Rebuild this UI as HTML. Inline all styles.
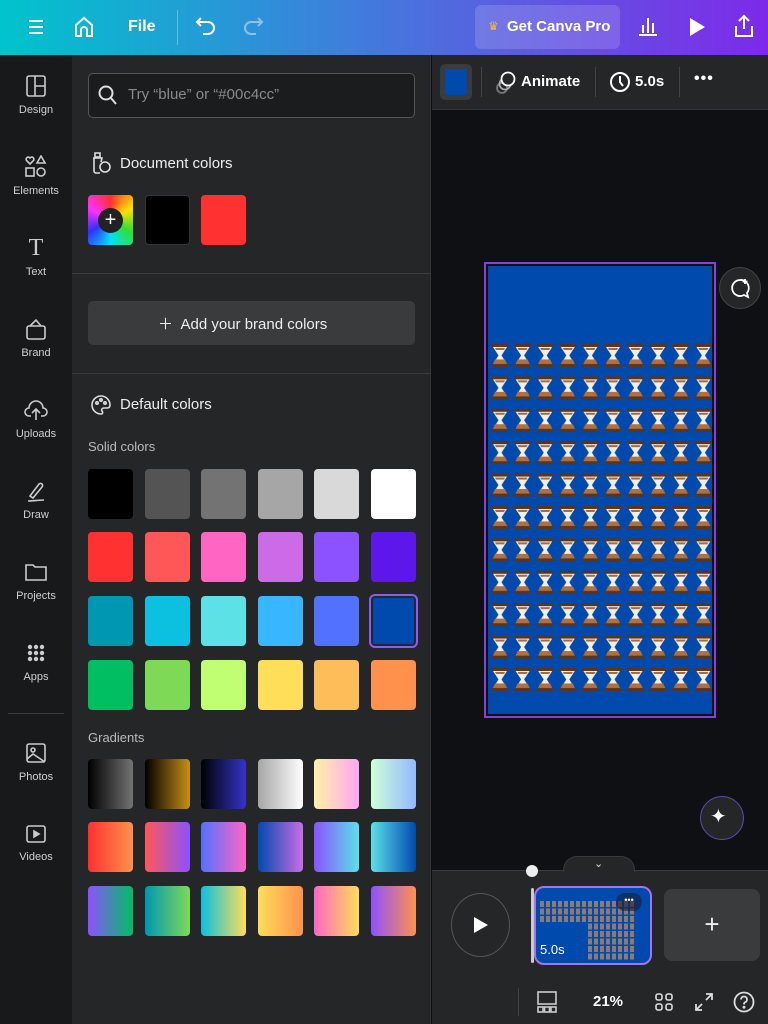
<!DOCTYPE html>
<html><head><meta charset="utf-8"><style>
*{box-sizing:border-box;margin:0;padding:0}
body{width:768px;height:1024px;overflow:hidden;background:#0e1014;font-family:"Liberation Sans",sans-serif;color:#fff;position:relative}
.abs{position:absolute}
.top{left:0;top:0;width:768px;height:55px;background:linear-gradient(90deg,#00c4cc 0%,#2f8fd9 35%,#5a5fe0 65%,#7d2ae8 100%)}
.rail{left:0;top:55px;width:72px;height:969px;background:#18191b}
.ri{position:absolute;left:0;width:72px;text-align:center;font-size:11px;color:#d0d0d0}
.panel{left:72px;top:55px;width:359px;height:969px;background:#252627;border-right:1px solid #333}
.sw{position:absolute;width:45px;height:50px;border-radius:4px}
.lbl{position:absolute;font-size:13px;color:#bbb}
.h{position:absolute;font-size:15px;color:#eee}
</style></head><body>
<div class="abs top">
 <svg class="abs" style="left:26px;top:17px" width="20" height="20" viewBox="0 0 20 20" stroke="#fff" stroke-width="2"><path d="M3 4h14M3 10h14M3 16h14"/></svg>
 <svg class="abs" style="left:73px;top:15px" width="22" height="24" viewBox="0 0 22 24" fill="none" stroke="#fff" stroke-width="2"><path d="M3 21V10l8-7 8 7v11h-5v-6a3 3 0 0 0-6 0v6z"/></svg>
 <div class="abs" style="left:128px;top:18px;font-size:16px;font-weight:bold">File</div>
 <div class="abs" style="left:177px;top:10px;width:1px;height:35px;background:rgba(255,255,255,.3)"></div>
 <svg class="abs" style="left:195px;top:15px" width="22" height="22" viewBox="0 0 22 22" fill="none" stroke="#fff" stroke-width="2"><path d="M6 3L2 7l4 4M2 7h11a6 6 0 0 1 0 12H8"/></svg>
 <svg class="abs" style="left:242px;top:15px" width="22" height="22" viewBox="0 0 22 22" fill="none" stroke="rgba(255,255,255,.45)" stroke-width="2"><path d="M16 3l4 4-4 4M20 7H9a6 6 0 0 0 0 12h5"/></svg>
 <div class="abs" style="left:475px;top:5px;width:145px;height:44px;background:rgba(255,255,255,.15);border-radius:6px"></div>
 <div class="abs" style="left:488px;top:19px;font-size:12px;color:#f7b731">♛</div>
 <div class="abs" style="left:507px;top:18px;font-size:15px;font-weight:bold">Get Canva Pro</div>
 <svg class="abs" style="left:637px;top:15px" width="22" height="22" viewBox="0 0 22 22" stroke="#fff" stroke-width="2"><path d="M2 20h18M6 18V10M11 18V3M16 18V8"/></svg>
 <svg class="abs" style="left:688px;top:16px" width="18" height="22" viewBox="0 0 18 22"><path d="M2 2l15 9-15 9z" fill="#fff"/></svg>
 <svg class="abs" style="left:733px;top:14px" width="22" height="24" viewBox="0 0 22 24" fill="none" stroke="#fff" stroke-width="2"><path d="M11 15V2M6 7l5-5 5 5M3 12v10h16V12"/></svg>
</div>

<div class="abs rail">
 <svg class="abs" style="left:26px;top:20px" width="20" height="22" viewBox="0 0 20 22" fill="none" stroke="#ccc" stroke-width="1.6"><rect x="1" y="1" width="18" height="20" rx="2"/><path d="M9 1v20M9 11h10"/></svg>
 <div class="ri" style="top:49px">Design</div>
 <svg class="abs" style="left:25px;top:100px" width="22" height="22" viewBox="0 0 22 22" fill="none" stroke="#ccc" stroke-width="1.6"><path d="M5 9L1.5 5.5a2 2 0 0 1 3.5-2.5 2 2 0 0 1 3.5 2.5z"/><path d="M16 1l4 7h-8z"/><rect x="1" y="13" width="8" height="8"/><circle cx="16" cy="17" r="4"/></svg>
 <div class="ri" style="top:130px">Elements</div>
 <div class="ri" style="top:180px;font-family:'Liberation Serif',serif;font-size:24px;color:#ccc">T</div>
 <div class="ri" style="top:211px">Text</div>
 <svg class="abs" style="left:26px;top:263px" width="20" height="22" viewBox="0 0 20 22" fill="none" stroke="#ccc" stroke-width="1.6"><rect x="1" y="8" width="18" height="13" rx="2"/><path d="M4 8l6-6 5 6"/></svg>
 <div class="ri" style="top:292px">Brand</div>
 <svg class="abs" style="left:24px;top:344px" width="24" height="22" viewBox="0 0 24 22" fill="none" stroke="#ccc" stroke-width="1.6"><path d="M7 17H5a4 4 0 0 1 0-8 7 7 0 0 1 14 0 4 4 0 0 1 0 8h-2M12 21V11M8 14l4-4 4 4"/></svg>
 <div class="ri" style="top:373px">Uploads</div>
 <svg class="abs" style="left:26px;top:425px" width="20" height="22" viewBox="0 0 20 22" fill="none" stroke="#ccc" stroke-width="1.6"><path d="M4 16l9-12a2 2 0 0 1 3 3L7 18zM2 21c5 0 12-1 16-1"/></svg>
 <div class="ri" style="top:454px">Draw</div>
 <svg class="abs" style="left:25px;top:508px" width="22" height="18" viewBox="0 0 22 18" fill="none" stroke="#ccc" stroke-width="1.6"><path d="M1 2h7l2 2h11v13H1z"/></svg>
 <div class="ri" style="top:535px">Projects</div>
 <svg class="abs" style="left:27px;top:589px" width="18" height="18" viewBox="0 0 18 18" fill="#ccc"><circle cx="3" cy="3" r="2.2"/><circle cx="9" cy="3" r="2.2"/><circle cx="15" cy="3" r="2.2"/><circle cx="3" cy="9" r="2.2"/><circle cx="9" cy="9" r="2.2"/><circle cx="15" cy="9" r="2.2"/><circle cx="3" cy="15" r="2.2"/><circle cx="9" cy="15" r="2.2"/><circle cx="15" cy="15" r="2.2"/></svg>
 <div class="ri" style="top:616px">Apps</div>
 <div class="abs" style="left:8px;top:658px;width:56px;height:1px;background:#3a3a3a"></div>
 <svg class="abs" style="left:26px;top:688px" width="20" height="20" viewBox="0 0 20 20" fill="none" stroke="#ccc" stroke-width="1.6"><rect x="1" y="1" width="18" height="18" rx="2"/><circle cx="7" cy="7" r="2"/><path d="M1 16l6-5 12 8"/></svg>
 <div class="ri" style="top:716px">Photos</div>
 <svg class="abs" style="left:26px;top:770px" width="20" height="18" viewBox="0 0 20 18" fill="none" stroke="#ccc" stroke-width="1.6"><rect x="1" y="1" width="18" height="16" rx="2"/><path d="M8 6v6l5-3z" fill="#ccc"/></svg>
 <div class="ri" style="top:796px">Videos</div>
</div>

<div class="abs panel">
 <div class="abs" style="left:16px;top:18px;width:327px;height:45px;border:1px solid #555;border-radius:5px;background:#1b1c1d"></div>
 <svg class="abs" style="left:26px;top:30px" width="20" height="22" viewBox="0 0 20 22" fill="none" stroke="#ddd" stroke-width="2"><circle cx="8" cy="8" r="6.5"/><path d="M13 13l5 6"/></svg>
 <div class="abs" style="left:56px;top:31px;font-size:15px;color:#8a8a8a">Try “blue” or “#00c4cc”</div>
 <svg class="abs" style="left:18px;top:96px" width="22" height="24" viewBox="0 0 22 24" fill="none" stroke="#ddd" stroke-width="1.6"><path d="M5 2h5v4H5zM3 7h9l-1 4M4 7v13a2 2 0 0 0 2 2h4"/><circle cx="15" cy="16" r="5"/></svg>
 <div class="h" style="left:48px;top:100px">Document colors</div>
 <div class="sw" style="left:16px;top:140px;background:conic-gradient(#ff3030,#ffe000,#30e030,#00e0ff,#3030ff,#ff30ff,#ff3030)"></div>
 <div class="abs" style="left:26px;top:153px;width:25px;height:25px;border-radius:50%;background:#222;text-align:center;line-height:24px;font-size:20px">+</div>
 <div class="sw" style="left:73px;top:140px;background:#000;border:1px solid #333"></div>
 <div class="sw" style="left:129px;top:140px;background:#ff3131"></div>
 <div class="abs" style="left:0;top:218px;width:359px;height:1px;background:#3c3c3c"></div>
 <div class="abs" style="left:16px;top:246px;width:327px;height:44px;background:#3a3b3c;border-radius:5px"></div>
 <div class="abs" style="left:86px;top:258px;font-size:15px;color:#eee">＋&nbsp; Add your brand colors</div>
 <div class="abs" style="left:0;top:318px;width:359px;height:1px;background:#3c3c3c"></div>
 <svg class="abs" style="left:18px;top:339px" width="22" height="22" viewBox="0 0 22 22" fill="none" stroke="#ddd" stroke-width="1.6"><path d="M11 2a9 9 0 1 0 0 18c2 0 2-2 1-3s0-3 2-3h3c2 0 3-1 3-3a9 9 0 0 0-9-9z"/><circle cx="7" cy="9" r="1.2"/><circle cx="11" cy="6" r="1.2"/><circle cx="15" cy="9" r="1.2"/></svg>
 <div class="h" style="left:48px;top:341px">Default colors</div>
 <div class="lbl" style="left:16px;top:384px">Solid colors</div>
 <div class="lbl" style="left:16px;top:675px">Gradients</div>
</div>

<!-- solid swatches -->
<div class="sw" style="left:88px;top:469px;background:#000"></div><div class="sw" style="left:145px;top:469px;background:#545454"></div><div class="sw" style="left:201px;top:469px;background:#737373"></div><div class="sw" style="left:258px;top:469px;background:#a6a6a6"></div><div class="sw" style="left:314px;top:469px;background:#d9d9d9"></div><div class="sw" style="left:371px;top:469px;background:#fff"></div>
<div class="sw" style="left:88px;top:532px;background:#ff3131"></div><div class="sw" style="left:145px;top:532px;background:#ff5757"></div><div class="sw" style="left:201px;top:532px;background:#ff66c4"></div><div class="sw" style="left:258px;top:532px;background:#cb6ce6"></div><div class="sw" style="left:314px;top:532px;background:#8c52ff"></div><div class="sw" style="left:371px;top:532px;background:#5e17eb"></div>
<div class="sw" style="left:88px;top:596px;background:#0097b2"></div><div class="sw" style="left:145px;top:596px;background:#0cc0df"></div><div class="sw" style="left:201px;top:596px;background:#5ce1e6"></div><div class="sw" style="left:258px;top:596px;background:#38b6ff"></div><div class="sw" style="left:314px;top:596px;background:#5271ff"></div><div class="sw" style="left:369px;top:594px;width:49px;height:54px;border:2px solid #8b5cf6;border-radius:6px;background:#004aad;box-shadow:inset 0 0 0 2px #252627"></div>
<div class="sw" style="left:88px;top:660px;background:#00bf63"></div><div class="sw" style="left:145px;top:660px;background:#7ed957"></div><div class="sw" style="left:201px;top:660px;background:#c1ff72"></div><div class="sw" style="left:258px;top:660px;background:#ffde59"></div><div class="sw" style="left:314px;top:660px;background:#ffbd59"></div><div class="sw" style="left:371px;top:660px;background:#ff914d"></div>
<!-- gradients -->
<div class="sw" style="left:88px;top:759px;background:linear-gradient(90deg,#000,#737373)"></div><div class="sw" style="left:145px;top:759px;background:linear-gradient(90deg,#000,#c89116)"></div><div class="sw" style="left:201px;top:759px;background:linear-gradient(90deg,#000,#3533cd)"></div><div class="sw" style="left:258px;top:759px;background:linear-gradient(90deg,#a6a6a6,#fff)"></div><div class="sw" style="left:314px;top:759px;background:linear-gradient(90deg,#fff1a6,#ffa6f5)"></div><div class="sw" style="left:371px;top:759px;background:linear-gradient(90deg,#cdffd8,#94b9ff)"></div>
<div class="sw" style="left:88px;top:822px;background:linear-gradient(90deg,#ff3131,#ff914d)"></div><div class="sw" style="left:145px;top:822px;background:linear-gradient(90deg,#ff5757,#8c52ff)"></div><div class="sw" style="left:201px;top:822px;background:linear-gradient(90deg,#5271ff,#ff66c4)"></div><div class="sw" style="left:258px;top:822px;background:linear-gradient(90deg,#004aad,#cb6ce6)"></div><div class="sw" style="left:314px;top:822px;background:linear-gradient(90deg,#8c52ff,#5ce1e6)"></div><div class="sw" style="left:371px;top:822px;background:linear-gradient(90deg,#5de0e6,#004aad)"></div>
<div class="sw" style="left:88px;top:886px;background:linear-gradient(90deg,#8c52ff,#00bf63)"></div><div class="sw" style="left:145px;top:886px;background:linear-gradient(90deg,#0097b2,#7ed957)"></div><div class="sw" style="left:201px;top:886px;background:linear-gradient(90deg,#0cc0df,#ffde59)"></div><div class="sw" style="left:258px;top:886px;background:linear-gradient(90deg,#ffde59,#ff914d)"></div><div class="sw" style="left:314px;top:886px;background:linear-gradient(90deg,#ff66c4,#ffde59)"></div><div class="sw" style="left:371px;top:886px;background:linear-gradient(90deg,#8c52ff,#ff914d)"></div>

<!-- right toolbar -->
<div class="abs" style="left:432px;top:55px;width:336px;height:55px;background:#252627;border-bottom:1px solid #333"></div>
<div class="abs" style="left:440px;top:64px;width:32px;height:36px;background:#3a3b3c;border-radius:5px"></div>
<div class="abs" style="left:445px;top:69px;width:22px;height:26px;background:#004aad;border-radius:2px"></div>
<div class="abs" style="left:481px;top:67px;width:1px;height:30px;background:#444"></div>
<svg class="abs" style="left:494px;top:70px" width="24" height="26" viewBox="0 0 24 26" fill="none" stroke-width="1.8"><circle cx="8" cy="18" r="5" stroke="#777"/><circle cx="11" cy="14" r="5.5" stroke="#aaa"/><circle cx="14" cy="9" r="6.5" stroke="#fff" fill="#252627"/></svg>
<div class="abs" style="left:521px;top:73px;font-size:15px;font-weight:bold">Animate</div>
<div class="abs" style="left:595px;top:67px;width:1px;height:30px;background:#444"></div>
<svg class="abs" style="left:609px;top:71px" width="22" height="22" viewBox="0 0 22 22" fill="none" stroke="#fff" stroke-width="2"><circle cx="11" cy="11" r="9"/><path d="M11 5v6l3 4"/></svg>
<div class="abs" style="left:635px;top:73px;font-size:15px;font-weight:bold">5.0s</div>
<div class="abs" style="left:679px;top:67px;width:1px;height:30px;background:#444"></div>
<div class="abs" style="left:694px;top:70px;font-size:16px;font-weight:bold;letter-spacing:1px">•••</div>

<!-- canvas -->
<div class="abs" style="left:484px;top:262px;width:232px;height:456px;border:2px solid #8b3fd9;background:#0e1014;padding:2px">
 <div style="width:224px;height:448px;background:#004aad;position:relative">
  <svg class="abs" style="left:0;top:74px" width="224" height="360">
   <defs><pattern id="hg" x="2" y="0" width="22.6" height="32.4" patternUnits="userSpaceOnUse">
    <rect x="1.5" y="4" width="17" height="3" rx="1" fill="#5e3418"/>
    <path d="M3 7h14l-5.5 8.5 5.5 8.5h-14l5.5-8.5z" fill="#f2efe8"/>
    <path d="M5 19.5h10l2 4.5H3z" fill="#b07040"/>
    <path d="M5 8h10l-1 2H6z" fill="#a06a44"/>
    <rect x="1.5" y="24" width="17" height="3" rx="1" fill="#5e3418"/>
   </pattern></defs>
   <rect width="224" height="360" fill="url(#hg)"/>
  </svg>
 </div>
</div>
<div class="abs" style="left:719px;top:267px;width:42px;height:42px;border-radius:50%;background:#252627;border:1px solid #444"></div>
<svg class="abs" style="left:729px;top:277px" width="22" height="22" viewBox="0 0 22 22" fill="none" stroke="#fff" stroke-width="1.8"><path d="M11 3a8 8 0 1 0 4 15l4 2-1-4A8 8 0 0 0 11 3z"/><path d="M16 2v5M13.5 4.5h5"/></svg>
<div class="abs" style="left:700px;top:796px;width:44px;height:44px;border-radius:50%;background:#252627;border:1px solid #5a4bbf"></div>
<div class="abs" style="left:710px;top:804px;font-size:20px">✦</div>

<!-- bottom -->
<div class="abs" style="left:432px;top:870px;width:336px;height:154px;background:#252627;border-top:1px solid #3a3a3a"></div>
<div class="abs" style="left:563px;top:856px;width:72px;height:16px;background:#252627;border-radius:14px 14px 0 0;border:1px solid #3a3a3a;border-bottom:none"></div>
<div class="abs" style="left:594px;top:857px;font-size:11px;color:#ddd">⌄</div>
<div class="abs" style="left:526px;top:865px;width:12px;height:12px;background:#eee;border-radius:50%"></div>
<div class="abs" style="left:451px;top:893px;width:59px;height:64px;border-radius:50%;border:1px solid #555"></div>
<svg class="abs" style="left:472px;top:915px" width="18" height="20" viewBox="0 0 18 20"><path d="M2 2l14 8-14 8z" fill="#fff"/></svg>
<div class="abs" style="left:531px;top:888px;width:3px;height:75px;background:#ccc;border-radius:2px"></div>
<div class="abs" style="left:534px;top:886px;width:118px;height:79px;border:2px solid #a872ea;border-radius:10px;background:#004aad;overflow:hidden">
 <svg class="abs" style="left:3px;top:12px" width="100" height="62"><defs><pattern id="hs" width="6" height="7.5" patternUnits="userSpaceOnUse"><rect x="1" y="1" width="4" height="6" fill="#8e7a6e"/></pattern></defs><rect x="0" y="0" width="96" height="23" fill="url(#hs)"/><rect x="48" y="23" width="48" height="38" fill="url(#hs)"/></svg>
 <div class="abs" style="left:80px;top:5px;width:26px;height:18px;border-radius:9px;background:rgba(30,30,50,.6);font-size:9px;text-align:center;line-height:14px">•••</div>
 <div class="abs" style="left:4px;top:54px;font-size:13px">5.0s</div>
</div>
<div class="abs" style="left:664px;top:889px;width:96px;height:72px;border-radius:8px;background:#3a3b3c;text-align:center;line-height:70px;font-size:26px;color:#eee">+</div>
<div class="abs" style="left:518px;top:988px;width:1px;height:28px;background:#444"></div>
<svg class="abs" style="left:537px;top:991px" width="20" height="22" viewBox="0 0 20 22" fill="none" stroke="#ccc" stroke-width="1.6"><rect x="1" y="1" width="18" height="12"/><rect x="1" y="16" width="5" height="5"/><rect x="7.5" y="16" width="5" height="5"/><rect x="14" y="16" width="5" height="5"/></svg>
<div class="abs" style="left:593px;top:993px;font-size:15px;font-weight:bold">21%</div>
<svg class="abs" style="left:655px;top:993px" width="18" height="18" viewBox="0 0 18 18" fill="none" stroke="#ddd" stroke-width="1.6"><rect x="1" y="1" width="6" height="6" rx="2"/><rect x="11" y="1" width="6" height="6" rx="2"/><rect x="1" y="11" width="6" height="6" rx="2"/><rect x="11" y="11" width="6" height="6" rx="2"/></svg>
<svg class="abs" style="left:694px;top:992px" width="20" height="20" viewBox="0 0 20 20" fill="none" stroke="#ddd" stroke-width="1.8"><path d="M12 2h6v6M18 2l-6 6M8 18H2v-6M2 18l6-6"/></svg>
<svg class="abs" style="left:733px;top:991px" width="22" height="22" viewBox="0 0 22 22" fill="none" stroke="#ddd" stroke-width="1.8"><circle cx="11" cy="11" r="9.5"/><path d="M8 8.5a3 3 0 1 1 4 2.8c-1 .4-1 1-1 2.2"/><circle cx="11" cy="16.3" r=".6" fill="#ddd"/></svg>
</body></html>
